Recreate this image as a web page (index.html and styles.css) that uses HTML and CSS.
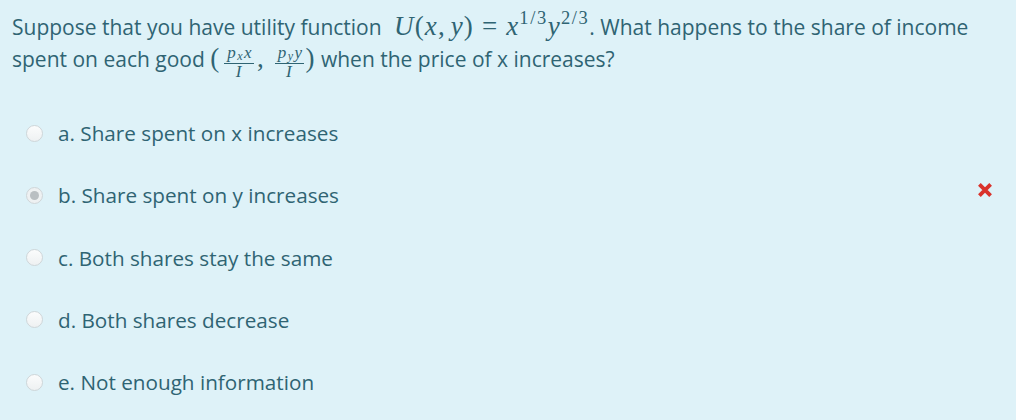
FILE: index.html
```html
<!DOCTYPE html>
<html>
<head>
<meta charset="utf-8">
<link rel="stylesheet" href="styles.css">
</head>
<body>
<div class="que">
  <div class="qtext">
    <p class="line">Suppose that you have utility function <span class="m m1"><i>U</i>(<i>x</i>,<span class="sp"></span><i>y</i>)<span class="rel">=</span><i>x</i><sup>1/3</sup><i>y</i><sup>2/3</sup></span>. What happens to the share of income</p>
    <p class="line">spent on each good <span class="m">(<span class="frac"><span class="num"><i>p<sub>x</sub>x</i></span><span class="den"><i>I</i></span></span><span class="comma">,</span><span class="frac"><span class="num"><i>p<sub>y</sub>y</i></span><span class="den"><i>I</i></span></span>)</span> when the price of x increases?</p>
  </div>
  <div class="answers">
    <div class="opt"><span class="radio"></span><span class="lbl">a. Share spent on x increases</span></div>
    <div class="opt"><span class="radio checked"></span><span class="lbl">b. Share spent on y increases</span><span class="x">
      <svg width="16" height="16" viewBox="0 0 16 16"><path d="M2.4 2.4 L13.6 13.6 M13.6 2.4 L2.4 13.6" stroke="#d9322b" stroke-width="3.8" stroke-linecap="butt"/></svg></span></div>
    <div class="opt"><span class="radio"></span><span class="lbl">c. Both shares stay the same</span></div>
    <div class="opt"><span class="radio"></span><span class="lbl">d. Both shares decrease</span></div>
    <div class="opt"><span class="radio"></span><span class="lbl">e. Not enough information</span></div>
  </div>
</div>
</body>
</html>
```
FILE: styles.css
```css
html, body {
  margin: 0;
  padding: 0;
  background: #def2f8;
}
body {
  width: 1016px;
  height: 420px;
  overflow: hidden;
  font-family: "Open Sans", "Noto Sans", sans-serif;
  color: #2f6473;
  font-size: 21px;
}
.que {
  padding: 11px 0 0 12px;
}
.qtext .line {
  margin: 0;
  height: 32px;
  line-height: 32px;
  white-space: nowrap;
}
.m {
  font-family: "Liberation Serif", "DejaVu Serif", serif;
  font-size: 27px;
  line-height: 0;
  color: #2f6473;
  letter-spacing: 1.1px;
}
.m1 {
  margin-left: 7px;
}
.m i {
  font-style: italic;
}
.sp {
  display: inline-block;
  width: 5px;
}
.rel {
  margin: 0 8px;
}
.m sup {
  font-size: 18.5px;
  font-style: normal;
  vertical-align: 11px;
  line-height: 0;
  letter-spacing: 1.6px;
}
.comma {
  margin: 0 6px 0 2px;
}
.frac {
  display: inline-block;
  vertical-align: -10px;
  text-align: center;
  font-size: 17px;
  margin: 0 1px 0 4px;
  letter-spacing: 1.4px;
}
.frac .num {
  display: block;
  height: 16px;
  line-height: 12.6px;
  border-bottom: 1.5px solid #2f6473;
  padding: 0 1px 0 3px;
}
.frac .den {
  display: block;
  height: 17px;
  line-height: 16.2px;
}
.frac sub {
  font-size: 12px;
  vertical-align: -2px;
  line-height: 0;
}
.answers {
  padding-top: 27px;
  margin-left: -12px;
  display: flex;
  flex-direction: column;
}
.opt {
  display: flex;
  align-items: center;
  height: 62.25px;
  line-height: 30px;
  width: 1016px;
  font-size: 20.7px;
}
.radio {
  width: 17px;
  height: 17px;
  border-radius: 50%;
  border: 1px solid #cfd6d9;
  background: linear-gradient(#fbfcfc, #eef1f2);
  margin-left: 26px;
  margin-right: 15px;
  box-sizing: border-box;
  position: relative;
  flex: none;
}
.radio.checked {
  background: #eef1f2;
}
.radio.checked::after {
  content: "";
  position: absolute;
  left: 3px;
  top: 3px;
  width: 9px;
  height: 9px;
  border-radius: 50%;
  background: #b9bfc2;
}
.lbl {
  white-space: nowrap;
}
.x {
  margin-left: auto;
  margin-right: 23px;
  margin-bottom: 10px;
  display: flex;
}
```
